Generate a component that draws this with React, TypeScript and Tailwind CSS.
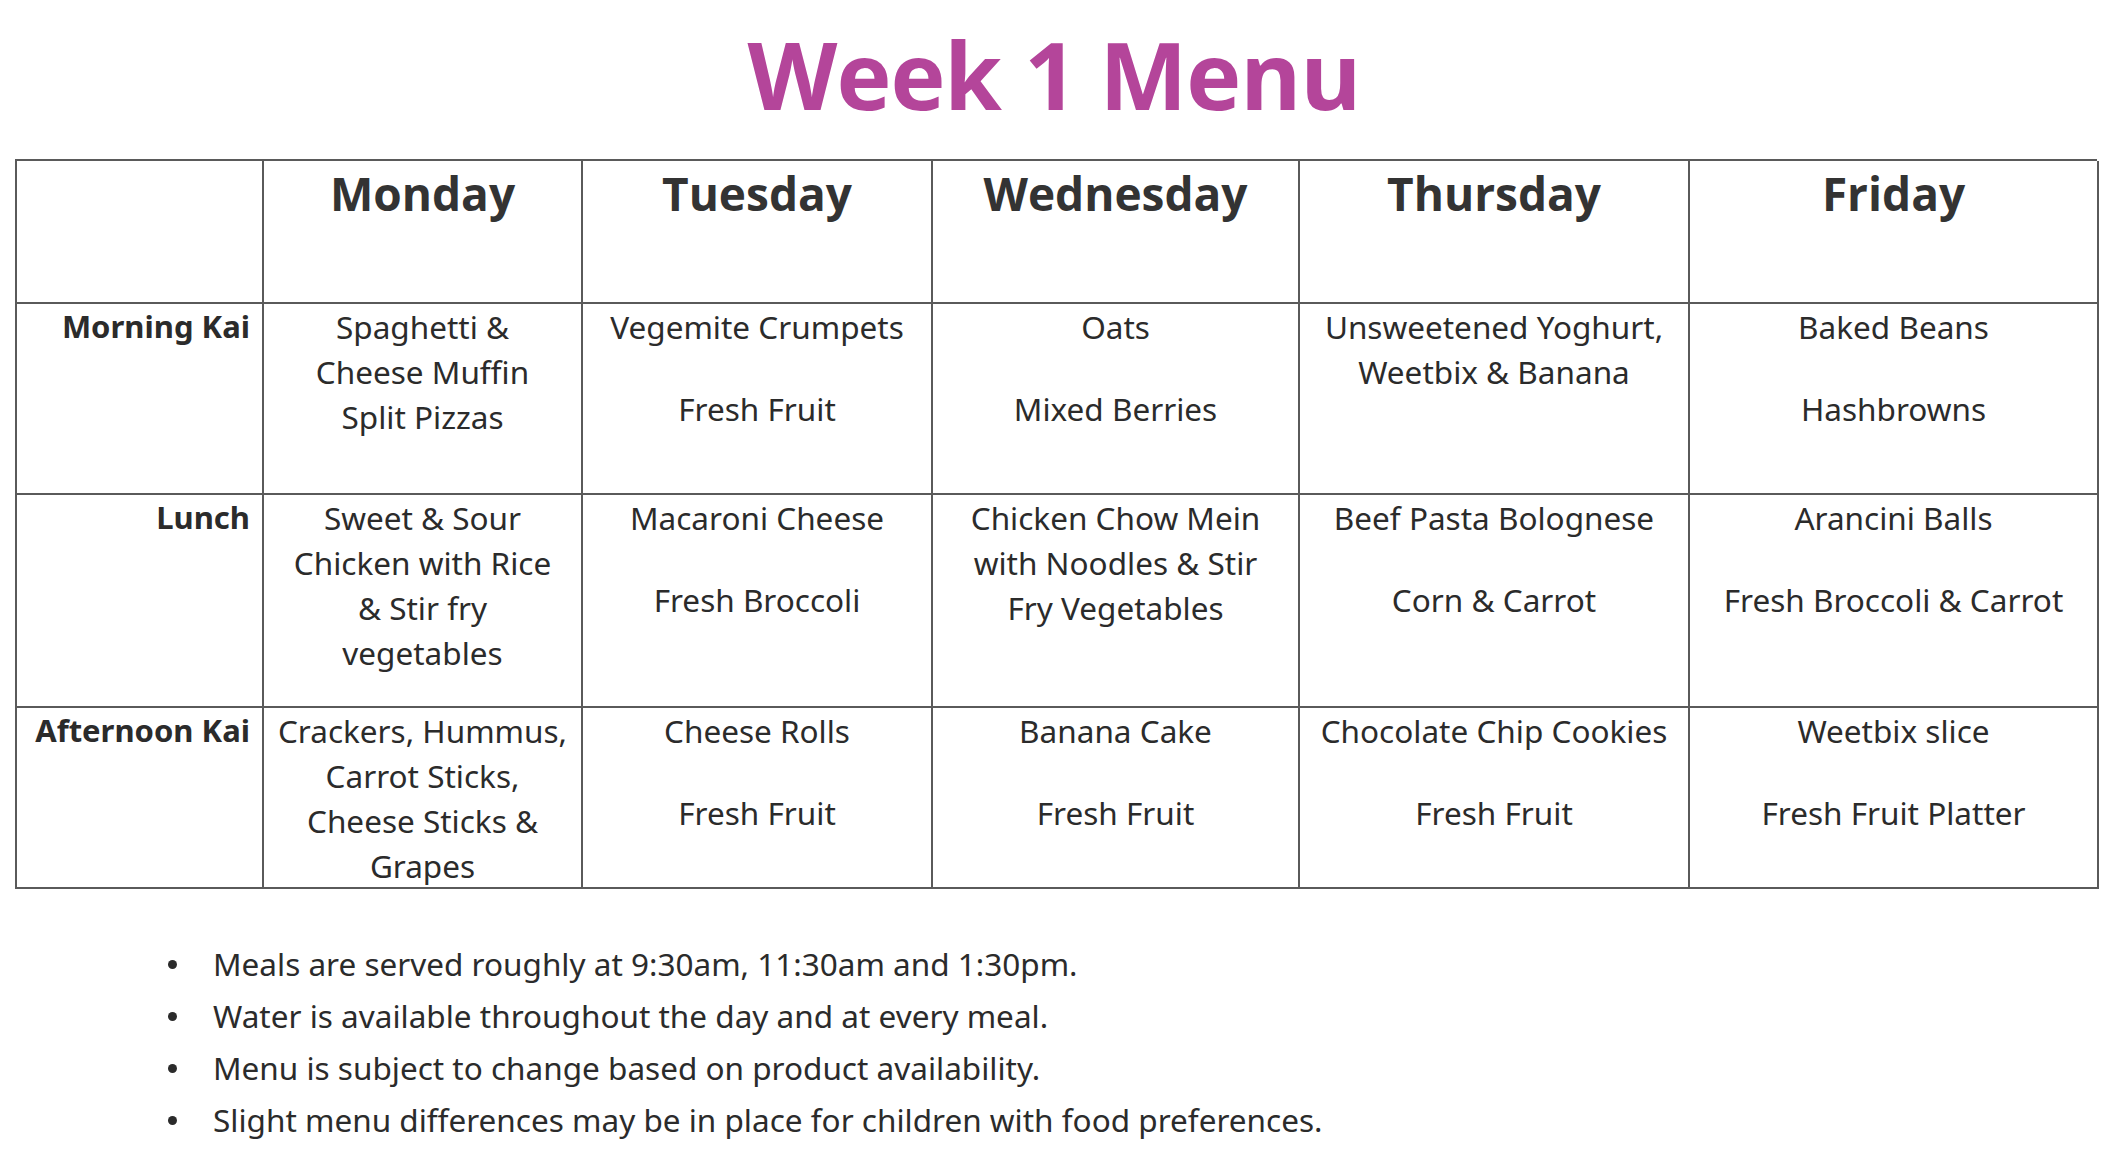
const days = ["Monday", "Tuesday", "Wednesday", "Thursday", "Friday"];

// each cell is a list of paragraphs; each paragraph is a list of lines
type Cell = string[][];

const rows: { label: string; height: string; cells: Cell[] }[] = [
  {
    label: "Morning Kai",
    height: "h-[191px]",
    cells: [
      [["Spaghetti &", "Cheese Muffin", "Split Pizzas"]],
      [["Vegemite Crumpets"], ["Fresh Fruit"]],
      [["Oats"], ["Mixed Berries"]],
      [["Unsweetened Yoghurt,", "Weetbix & Banana"]],
      [["Baked Beans"], ["Hashbrowns"]],
    ],
  },
  {
    label: "Lunch",
    height: "h-[213px]",
    cells: [
      [["Sweet & Sour", "Chicken with Rice", "& Stir fry", "vegetables"]],
      [["Macaroni Cheese"], ["Fresh Broccoli"]],
      [["Chicken Chow Mein", "with Noodles & Stir", "Fry Vegetables"]],
      [["Beef Pasta Bolognese"], ["Corn & Carrot"]],
      [["Arancini Balls"], ["Fresh Broccoli & Carrot"]],
    ],
  },
  {
    label: "Afternoon Kai",
    height: "h-[181px]",
    cells: [
      [["Crackers, Hummus,", "Carrot Sticks,", "Cheese Sticks &", "Grapes"]],
      [["Cheese Rolls"], ["Fresh Fruit"]],
      [["Banana Cake"], ["Fresh Fruit"]],
      [["Chocolate Chip Cookies"], ["Fresh Fruit"]],
      [["Weetbix slice"], ["Fresh Fruit Platter"]],
    ],
  },
];

const notes = [
  "Meals are served roughly at 9:30am, 11:30am and 1:30pm.",
  "Water is available throughout the day and at every meal.",
  "Menu is subject to change based on product availability.",
  "Slight menu differences may be in place for children with food preferences.",
];

const cols = "grid-cols-[247px_319px_350px_367px_390px_409px]";

export default function App() {
  return (
    <div className="min-h-[1166px] w-[2108px] bg-white text-[#2b2b2b] [font-family:'Noto_Sans',sans-serif]">
      <h1 className="pt-[14px] text-center text-[93px] font-bold leading-[120px] tracking-[-1px] text-[#b4459a] [font-family:'Open_Sans',sans-serif]">
        Week 1 Menu
      </h1>

      <div className={`ml-[15px] mt-[25px] grid w-[2082px] ${cols} border-l-2 border-t-2 border-[#5a5a5a]`}>
        <div className="h-[143px] border-b-2 border-r-2 border-[#5a5a5a]" />
        {days.map((d) => (
          <div
            key={d}
            className="h-[143px] border-b-2 border-r-2 border-[#5a5a5a] pt-[2px] text-center text-[46px] font-bold leading-[60px] text-[#333] [font-family:'Open_Sans',sans-serif]"
          >
            {d}
          </div>
        ))}

        {rows.map((row) => (
          <>
            <div
              key={row.label}
              className={`${row.height} border-b-2 border-r-2 border-[#5a5a5a] pr-[12px] text-right text-[31px] font-bold leading-[45px]`}
            >
              {row.label}
            </div>
            {row.cells.map((cell, i) => (
              <div
                key={row.label + i}
                className={`${row.height} flex flex-col gap-[37px] border-b-2 border-r-2 border-[#5a5a5a] text-center text-[31.5px] leading-[45px]`}
              >
                {cell.map((para, j) => (
                  <div key={j}>
                    {para.map((line) => (
                      <div key={line} className="whitespace-nowrap">
                        {line}
                      </div>
                    ))}
                  </div>
                ))}
              </div>
            ))}
          </>
        ))}
      </div>

      <ul className="mt-[49px] pl-[168px] text-[31.5px] leading-[52px]">
        {notes.map((n) => (
          <li key={n} className="flex items-center">
            <span className="mr-[36px] inline-block h-[9px] w-[9px] shrink-0 rounded-full bg-[#2b2b2b]" />
            {n}
          </li>
        ))}
      </ul>
    </div>
  );
}
